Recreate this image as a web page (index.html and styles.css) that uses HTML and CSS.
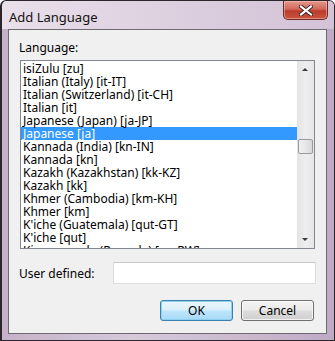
FILE: index.html
```html
<!DOCTYPE html>
<html lang="en">
<head>
	<meta charset="UTF-8">
	<title>Add Language</title>
	<link rel="stylesheet" href="styles.css">
</head>
<body>
	<div class="window">
		<div class="titlebar">
			<span class="title">Add Language</span>
			<div class="close-btn">
				<svg width="14" height="11" viewBox="0 0 14 11">
					<path d="M2 1.5 L12 9.5 M12 1.5 L2 9.5" stroke="#3a2020" stroke-width="4" stroke-linecap="square"/>
					<path d="M2 1.5 L12 9.5 M12 1.5 L2 9.5" stroke="#ffffff" stroke-width="2.2" stroke-linecap="square"/>
				</svg>
			</div>
		</div>

		<div class="client">
			<div class="field-label">Language:</div>

			<div class="listbox">
				<ul class="rows">
					<li>isiZulu [zu]</li>
					<li>Italian (Italy) [it-IT]</li>
					<li>Italian (Switzerland) [it-CH]</li>
					<li>Italian [it]</li>
					<li>Japanese (Japan) [ja-JP]</li>
					<li class="selected">Japanese [ja]</li>
					<li>Kannada (India) [kn-IN]</li>
					<li>Kannada [kn]</li>
					<li>Kazakh (Kazakhstan) [kk-KZ]</li>
					<li>Kazakh [kk]</li>
					<li>Khmer (Cambodia) [km-KH]</li>
					<li>Khmer [km]</li>
					<li>K'iche (Guatemala) [qut-GT]</li>
					<li>K'iche [qut]</li>
					<li>Kinyarwanda (Rwanda) [rw-RW]</li>
				</ul>
				<div class="scrollbar">
					<div class="arrow up"></div>
					<div class="track">
						<div class="thumb"></div>
					</div>
					<div class="arrow down"></div>
				</div>
			</div>

			<div class="user-row">
				<label for="userDefined" class="user-label">User defined:</label>
				<input type="text" id="userDefined" class="user-input">
			</div>

			<div class="buttons">
				<button class="btn btn-default">OK</button>
				<button class="btn">Cancel</button>
			</div>
		</div>
	</div>
</body>
</html>
```

FILE: styles.css
```css
html, body {
	margin: 0;
	padding: 0;
	background: #ffffff;
}

body {
	font-family: 'Noto Sans', 'Liberation Sans', sans-serif;
	font-size: 12px;
	color: #000;
}

.window {
	width: 335px;
	height: 341px;
	box-sizing: border-box;
	border: 1px solid #2a262c;
	border-left-width: 2px;
	border-radius: 6px 6px 0 0;
	background: linear-gradient(90deg, #c5b2ca 0%, #d6c9da 40%, #cbbad0 70%, #bfaac5 100%);
	padding: 0 7px 6px 6px;
	display: flex;
	flex-direction: column;
}

.titlebar {
	height: 28px;
	display: flex;
	align-items: flex-start;
	background: linear-gradient(90deg, #e9e0ea 0%, #e2d6e4 30%, #dacddd 60%, #d3c3d7 100%);
	margin: 0 -7px 0 -6px;
	padding: 0 7px 0 7px;
	border-radius: 5px 5px 0 0;
}

.title {
	font-size: 13px;
	line-height: 16px;
	margin-top: 8px;
	color: #111;
}

.close-btn {
	margin-left: auto;
	margin-right: -1px;
	width: 45px;
	height: 19px;
	box-sizing: border-box;
	border: 1px solid #6e2a2a;
	border-top: none;
	border-radius: 0 0 5px 5px;
	background: linear-gradient(180deg, #e39a8d 0%, #d2685a 45%, #bb3b2c 55%, #c9553f 100%);
	display: flex;
	align-items: center;
	justify-content: center;
	box-shadow: inset 0 0 0 1px rgba(255, 200, 190, 0.5);
}

.client {
	flex: 1;
	background: #f0f0f0;
	border: 1px solid #6f6a72;
	padding: 0 10px;
	display: flex;
	flex-direction: column;
}

.field-label {
	margin-top: 10px;
	line-height: 15px;
	height: 15px;
}

.listbox {
	margin-top: 5px;
	margin-left: 1px;
	width: 295px;
	height: 189px;
	box-sizing: border-box;
	border: 1px solid #828790;
	background: #fff;
	display: flex;
}

.rows {
	flex: 1;
	list-style-type: none;
	margin: 0;
	padding: 1px 0 0 0;
	overflow: hidden;
}

.rows li {
	height: 13px;
	line-height: 13px;
	padding-left: 2px;
	white-space: nowrap;
}

.rows li.selected {
	background: #3399ff;
	color: #fff;
}

.scrollbar {
	width: 17px;
	display: flex;
	flex-direction: column;
	background: linear-gradient(90deg, #e3e3e3 0%, #eeeeee 50%, #e6e6e6 100%);
}

.arrow {
	height: 17px;
	position: relative;
}

.arrow::after {
	content: '';
	position: absolute;
	left: 5px;
	width: 0;
	height: 0;
	border-left: 3px solid transparent;
	border-right: 3px solid transparent;
}

.arrow.up::after {
	top: 7px;
	border-bottom: 3px solid #3a3a3a;
}

.arrow.down::after {
	top: 7px;
	border-top: 3px solid #3a3a3a;
}

.track {
	flex: 1;
	padding-top: 61px;
}

.thumb {
	margin-left: 1px;
	width: 15px;
	height: 15px;
	box-sizing: border-box;
	border: 1px solid #9a9a9a;
	border-radius: 2px;
	background: linear-gradient(90deg, #f2f2f2 0%, #e6e6e6 50%, #d8d8d8 100%);
}

.user-row {
	margin-top: 13px;
	height: 22px;
	display: flex;
	align-items: center;
}

.user-label {
	width: 94px;
	line-height: 15px;
}

.user-input {
	width: 203px;
	height: 22px;
	box-sizing: border-box;
	border: 1px solid #dcdcdc;
	border-top-color: #c9c9c9;
	background: #fff;
	margin: 0;
	padding: 0 3px;
	font-family: 'Noto Sans', 'Liberation Sans', sans-serif;
	font-size: 12px;
	outline: none;
}

.buttons {
	margin-top: 16px;
	display: flex;
	justify-content: flex-end;
	gap: 8px;
	padding-right: 2px;
}

.btn {
	width: 73px;
	height: 21px;
	box-sizing: border-box;
	border: 1px solid #707070;
	border-radius: 3px;
	background: linear-gradient(180deg, #f2f2f2 0%, #ebebeb 48%, #dddddd 52%, #cfcfcf 100%);
	font-family: 'Noto Sans', 'Liberation Sans', sans-serif;
	font-size: 12px;
	line-height: 17px;
	padding: 0;
	color: #000;
	box-shadow: inset 0 0 0 1px rgba(255, 255, 255, 0.7);
}

.btn-default {
	border-color: #3c7fb1;
	background: linear-gradient(180deg, #eaf6fd 0%, #d9f0fc 48%, #bee6fd 52%, #a7d9f5 100%);
	box-shadow: inset 0 0 0 1px #8ed0f0;
}
```
